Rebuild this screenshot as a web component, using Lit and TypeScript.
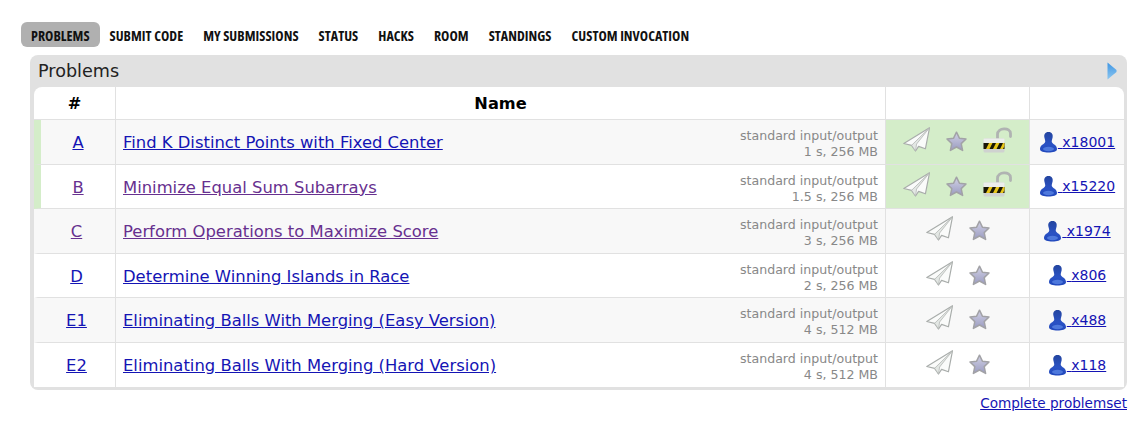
import { LitElement, html, css, svg } from "lit";
import { customElement } from "lit/decorators.js";

const rows = [
  { id: "A", name: "Find K Distinct Points with Fixed Center", lim: "1 s, 256 MB", n: "x18001", ok: true, visited: false },
  { id: "B", name: "Minimize Equal Sum Subarrays", lim: "1.5 s, 256 MB", n: "x15220", ok: true, visited: true },
  { id: "C", name: "Perform Operations to Maximize Score", lim: "3 s, 256 MB", n: "x1974", ok: false, visited: true },
  { id: "D", name: "Determine Winning Islands in Race", lim: "2 s, 256 MB", n: "x806", ok: false, visited: false },
  { id: "E1", name: "Eliminating Balls With Merging (Easy Version)", lim: "4 s, 512 MB", n: "x488", ok: false, visited: false },
  { id: "E2", name: "Eliminating Balls With Merging (Hard Version)", lim: "4 s, 512 MB", n: "x118", ok: false, visited: false },
];
const tabs = ["PROBLEMS", "SUBMIT CODE", "MY SUBMISSIONS", "STATUS", "HACKS", "ROOM", "STANDINGS", "CUSTOM INVOCATION"];

const plane = svg`<svg class="ic" viewBox="0 0 27 25" width="27" height="25">
  <path d="M26.5 0.8 L0.8 16.5 L8.6 18.3 L12.5 24 L15.6 19.4 L22.4 21.8 Z" fill="#fafbfa" stroke="#a9adab" stroke-width="1.2" stroke-linejoin="round"/>
  <path d="M26.5 0.8 L8.6 18.3 L12.5 24 L13.6 17 Z" fill="#e3e7e4" stroke="#b4b8b5" stroke-width=".8" stroke-linejoin="round"/>
</svg>`;
const star = svg`<svg class="ic star" viewBox="0 0 21 21" width="21" height="21">
  <defs><linearGradient id="sg" x1="0" y1="0" x2="0" y2="1"><stop offset="0" stop-color="#d2d2e6"/><stop offset="1" stop-color="#9a9bc0"/></linearGradient></defs>
  <path d="M10.5 1.2 L13.4 7.2 L20 8 L15.2 12.6 L16.6 19.4 L10.5 16 L4.4 19.4 L5.8 12.6 L1 8 L7.6 7.2 Z" fill="url(#sg)" stroke="#a2a2a6" stroke-width="1.5" stroke-linejoin="round"/>
</svg>`;
const lock = svg`<svg class="ic" viewBox="0 0 29 26" width="29" height="26">
  <path d="M14.5 12 V7.5 C14.5 0.5 27.5 0 27.5 6.5 V9.5" fill="none" stroke="#b0b3b2" stroke-width="2.8" stroke-linecap="round"/>
  <rect x="0.5" y="11.5" width="21" height="14" rx="1.5" fill="#cfd2d0"/>
  <rect x="0.5" y="11.5" width="21" height="4.5" rx="1" fill="#eceeec"/>
  <rect x="0.5" y="16" width="21" height="6" fill="#191708"/>
  <path d="M3 22 L6 16 H9.5 L6.5 22 Z M10 22 L13 16 H16.5 L13.5 22 Z M17 22 L20 16 H21.5 V19 L20 22 Z" fill="#e7c51a"/>
</svg>`;
const user = svg`<svg class="ic" viewBox="0 0 19 22" width="19" height="22">
  <defs><linearGradient id="ug" x1="0" y1="0" x2="0" y2="1"><stop offset="0" stop-color="#24459f"/><stop offset=".6" stop-color="#2a52c4"/><stop offset="1" stop-color="#2148bc"/></linearGradient></defs>
  <path d="M9.5 1 C13 1 14.2 3.6 13.6 6.4 C13.2 8.2 12.6 9.4 12.8 11 C13.6 13.2 18 14 18 18 C18 20.6 14 21.5 9.5 21.5 C5 21.5 1 20.6 1 18 C1 14 5.4 13.2 6.2 11 C6.4 9.4 5.8 8.2 5.4 6.4 C4.8 3.6 6 1 9.5 1 Z" fill="url(#ug)"/>
  <ellipse cx="9.5" cy="18" rx="5.5" ry="2.2" fill="#5f8ce8" opacity=".7"/>
</svg>`;
const arrow = svg`<svg viewBox="0 0 10 18" width="10" height="18">
  <defs><linearGradient id="ag" x1="0" y1="0" x2="0" y2="1"><stop offset="0" stop-color="#3f96e4"/><stop offset="1" stop-color="#8cc6ef"/></linearGradient></defs>
  <path d="M0.5 0.5 L9.5 8 V10 L0.5 17.5 Z" fill="url(#ag)"/>
</svg>`;

@customElement("app-root")
export class AppRoot extends LitElement {
  static styles = css`
    :host { display: block; width: 1132px; height: 431px; background: #fff; overflow: hidden; box-sizing: border-box; padding: 22px 5px 0 21px;
      font-family: "DejaVu Sans", Verdana, sans-serif; color: #000; }
    .tabs { display: flex; height: 25px; align-items: center; }
    .tab { font-family: "Open Sans", "Liberation Sans", sans-serif; font-stretch: 75%; font-weight: 700; font-size: 14px; letter-spacing: 0.03px; color: #111; padding: 0 10px; height: 25px; line-height: 28px; border-radius: 6px; white-space: nowrap; }
    .tab.on { background: #b0b0b0; }
    .panel { margin: 8px 0 0 9px; width: 1097px; box-sizing: border-box; background: #e1e1e1; border-radius: 8px; padding: 0 3px 3px 4px; }
    .cap { height: 32px; display: flex; align-items: center; justify-content: space-between; font-size: 17.6px; padding: 0 7px 0 4px; color: #222; }
    .cap svg { display: block; }
    table { width: 1090px; table-layout: fixed; border-collapse: separate; border-spacing: 0; background: #fff; border-radius: 8px 8px 0 0; overflow: hidden; }
    th { height: 33px; padding: 0; font-size: 16.2px; font-weight: 700; border-right: 1px solid #e1e1e1; border-bottom: 1px solid #e1e1e1; box-sizing: border-box; }
    td { padding: 0; border-right: 1px solid #e1e1e1; border-bottom: 1px solid #e1e1e1; box-sizing: border-box; height: 44.5px; }
    th:last-child, td:last-child { border-right: 0; }
    tr:last-child td { border-bottom: 0; }
    tr.odd td { background: #f8f8f8; }
    td.idx { text-align: center; font-size: 16.4px; border-left: 4px solid transparent; padding-top: 2px; }
    tr.ok td.idx { border-left: 7px solid #d4edc9; }
    a { color: #1414b4; text-decoration: underline; }
    a.v { color: #67308f; }
    .name { display: flex; align-items: center; justify-content: space-between; padding: 2px 7px 0; font-size: 16.4px; }
    .lim { text-align: right; font-size: 12.6px; color: #888; line-height: 16px; padding-top: 3px; }
    tr.ok td.act { background: #d4edc9; }
    .icons { display: flex; justify-content: center; align-items: center; gap: 16px; padding-bottom: 4px; }
    .ic { display: block; flex: none; }
    .star { margin-top: 4px; }
    .cnt { display: flex; justify-content: center; align-items: center; font-size: 14px; }
    .foot { display: block; text-align: right; font-size: 13.6px; margin-top: 5px; width: 1106px; }
  `;
  render() {
    return html`
      <div class="tabs">${tabs.map((t, i) => html`<div class="tab ${i === 0 ? "on" : ""}">${t}</div>`)}</div>
      <div class="panel">
        <div class="cap"><span>Problems</span>${arrow}</div>
        <table>
          <colgroup><col style="width:82px"/><col style="width:770px"/><col style="width:144px"/><col style="width:94px"/></colgroup>
          <thead><tr><th>#</th><th>Name</th><th></th><th></th></tr></thead>
          <tbody>
            ${rows.map((r, i) => html`<tr class="${i % 2 === 0 ? "odd" : ""} ${r.ok ? "ok" : ""}">
              <td class="idx"><a class="${r.visited ? "v" : ""}" href="#">${r.id}</a></td>
              <td><div class="name"><a class="${r.visited ? "v" : ""}" href="#">${r.name}</a>
                <div class="lim">standard input/output<br/>${r.lim}</div></div></td>
              <td class="act"><div class="icons">${plane}${star}${r.ok ? lock : ""}</div></td>
              <td><div class="cnt">${user}<a href="#">&nbsp;${r.n}</a></div></td>
            </tr>`)}
          </tbody>
        </table>
      </div>
      <a class="foot" href="#">Complete problemset</a>
    `;
  }
}
